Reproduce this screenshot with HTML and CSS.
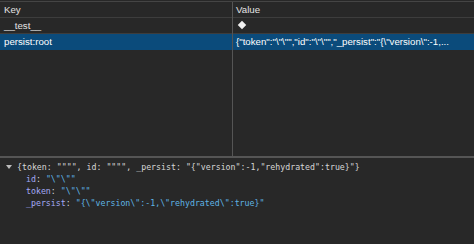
FILE: index.html
```html
<!DOCTYPE html>
<html lang="en">
<head>
    <meta charset="UTF-8">
    <title>Storage</title>
    <link rel="stylesheet" href="styles.css">
</head>
<body>
    <div class="grid">
        <div class="col col-key">
            <div class="cell head">Key</div>
            <div class="cell">__test__</div>
            <div class="cell selected">persist:root</div>
        </div>
        <div class="col col-value">
            <div class="cell head">Value</div>
            <div class="cell"><span class="diamond"></span></div>
            <div class="cell selected">{"token":"\"\"","id":"\"\"","_persist":"{\"version\":-1,...</div>
        </div>
    </div>

    <div class="preview">
        <div class="line"><span class="arrow"></span>{token: """", id: """", _persist: "{"version":-1,"rehydrated":true}"}</div>
        <div class="line child"><span class="prop">id</span>: <span class="str">"\"\""</span></div>
        <div class="line child"><span class="prop">token</span>: <span class="str">"\"\""</span></div>
        <div class="line child"><span class="prop">_persist</span>: <span class="str">"{\"version\":-1,\"rehydrated\":true}"</span></div>
    </div>
</body>
</html>
```

FILE: styles.css
```css
body {
    margin: 0;
    background-color: #282828;
    color: #e3e3e3;
    font-family: "Liberation Sans", Arial, sans-serif;
    font-size: 9.7px;
    height: 244px;
    overflow: hidden;
}
.grid {
    display: flex;
    height: 154px;
    margin-top: 1px;
    border-top: 1px solid #454545;
}
.col {
    display: flex;
    flex-direction: column;
}
.col-key {
    width: 232px;
    border-right: 1px solid #555555;
}
.col-value {
    flex: 1;
    min-width: 0;
}
.cell {
    height: 15px;
    line-height: 15px;
    padding: 0 8px 0 4px;
    border-bottom: 1px solid #3d3d3d;
    white-space: nowrap;
    overflow: hidden;
}
.col-value .cell {
    padding-left: 3px;
}
.selected {
    background-color: #0b4b7b;
    color: #ffffff;
    border-bottom-color: #0b4b7b;
}
.diamond {
    display: inline-block;
    width: 6px;
    height: 6px;
    margin-left: 3px;
    background-color: #f0f0f0;
    transform: rotate(45deg);
    vertical-align: middle;
    position: relative;
    top: -1px;
}
.preview {
    border-top: 2px solid #555555;
    padding-top: 3px;
    font-family: "DejaVu Sans Mono", "Liberation Mono", monospace;
    font-size: 8.25px;
    color: #d6d6d6;
}
.line {
    height: 12px;
    line-height: 12px;
    padding-left: 17px;
    position: relative;
    white-space: nowrap;
}
.line.child {
    padding-left: 26px;
}
.arrow {
    position: absolute;
    left: 6px;
    top: 4px;
    border-left: 3px solid transparent;
    border-right: 3px solid transparent;
    border-top: 4px solid #bdbdbd;
}
.prop {
    color: #a3a8f5;
}
.str {
    color: #5fb4e4;
}
```
